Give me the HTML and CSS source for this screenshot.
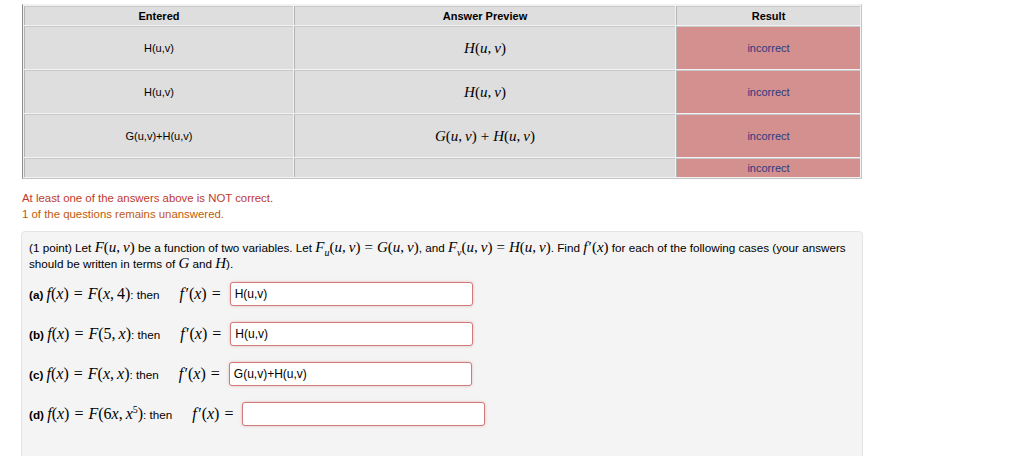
FILE: index.html
```html
<!DOCTYPE html>
<html lang="en">
<head>
    <meta charset="UTF-8">
    <title>Problem - Answers</title>
    <link rel="stylesheet" href="styles.css">
</head>
<body>
    <table class="attempt-results">
        <tr>
            <th class="col-entered">Entered</th>
            <th class="col-preview">Answer Preview</th>
            <th class="col-result">Result</th>
        </tr>
        <tr class="tall">
            <td>H(u,v)</td>
            <td class="preview"><span class="m">H</span>(<span class="m">u</span>,<span class="m sp">v</span>)</td>
            <td class="incorrect">incorrect</td>
        </tr>
        <tr class="tall">
            <td>H(u,v)</td>
            <td class="preview"><span class="m">H</span>(<span class="m">u</span>,<span class="m sp">v</span>)</td>
            <td class="incorrect">incorrect</td>
        </tr>
        <tr class="tall">
            <td>G(u,v)+H(u,v)</td>
            <td class="preview"><span class="m">G</span>(<span class="m">u</span>,<span class="m sp">v</span>)<span class="bin">+</span><span class="m">H</span>(<span class="m">u</span>,<span class="m sp">v</span>)</td>
            <td class="incorrect">incorrect</td>
        </tr>
        <tr class="short">
            <td></td>
            <td></td>
            <td class="incorrect">incorrect</td>
        </tr>
    </table>

    <div class="messages">
        <div class="msg-wrong">At least one of the answers above is NOT correct.</div>
        <div class="msg-blank">1 of the questions remains unanswered.</div>
    </div>

    <div class="problem">
        <p class="intro">(1 point) Let <span class="mx"><span class="m">F</span>(<span class="m">u</span>,<span class="m sp">v</span>)</span> be a function of two variables. Let <span class="mx"><span class="m">F</span><sub class="m">u</sub>(<span class="m">u</span>,<span class="m sp">v</span>)<span class="rel">=</span><span class="m">G</span>(<span class="m">u</span>,<span class="m sp">v</span>)</span>, and <span class="mx"><span class="m">F</span><sub class="m">v</sub>(<span class="m">u</span>,<span class="m sp">v</span>)<span class="rel">=</span><span class="m">H</span>(<span class="m">u</span>,<span class="m sp">v</span>)</span>. Find <span class="mx"><span class="m">f</span>&#8202;′(<span class="m">x</span>)</span> for each of the following cases (your answers should be written in terms of <span class="mx m">G</span> and <span class="mx m">H</span>).</p>

        <div class="part">
            <span class="label"><b>(a)</b> <span class="mx"><span class="m">f</span>(<span class="m">x</span>)<span class="rel">=</span><span class="m">F</span>(<span class="m">x</span>,<span class="sp">4</span>)</span>: then</span>
            <span class="deriv mx"><span class="m">f</span>&#8202;′(<span class="m">x</span>)<span class="rel">=</span></span>
            <input class="answer" type="text" value="H(u,v)">
        </div>
        <div class="part">
            <span class="label"><b>(b)</b> <span class="mx"><span class="m">f</span>(<span class="m">x</span>)<span class="rel">=</span><span class="m">F</span>(5,<span class="m sp">x</span>)</span>: then</span>
            <span class="deriv mx"><span class="m">f</span>&#8202;′(<span class="m">x</span>)<span class="rel">=</span></span>
            <input class="answer" type="text" value="H(u,v)">
        </div>
        <div class="part">
            <span class="label"><b>(c)</b> <span class="mx"><span class="m">f</span>(<span class="m">x</span>)<span class="rel">=</span><span class="m">F</span>(<span class="m">x</span>,<span class="m sp">x</span>)</span>: then</span>
            <span class="deriv mx"><span class="m">f</span>&#8202;′(<span class="m">x</span>)<span class="rel">=</span></span>
            <input class="answer" type="text" value="G(u,v)+H(u,v)">
        </div>
        <div class="part">
            <span class="label"><b>(d)</b> <span class="mx"><span class="m">f</span>(<span class="m">x</span>)<span class="rel">=</span><span class="m">F</span>(6<span class="m">x</span>,<span class="m sp">x</span><sup>5</sup>)</span>: then</span>
            <span class="deriv mx"><span class="m">f</span>&#8202;′(<span class="m">x</span>)<span class="rel">=</span></span>
            <input class="answer" type="text" value="">
        </div>
    </div>
</body>
</html>
```

FILE: styles.css
```css
/* page */
body {
    margin: 0;
    padding: 4px 0 0 22px;
    background: #fff;
    font-family: 'Liberation Sans', Arial, sans-serif;
    font-size: 11px;
    color: #000;
}

/* results table */
.attempt-results {
    width: 840px;
    border-collapse: separate;
    border-spacing: 1px;
    background: #f2f2f2;
    border-left: 1px solid #8a8a8a;
    border-top: 1px solid #f0f0f0;
    border-right: 1px solid #c4c4c4;
    border-bottom: 1px solid #c4c4c4;
    margin: 0;
}

.attempt-results th,
.attempt-results td {
    background: #dedede;
    text-align: center;
    padding: 0;
    border-left: 1px solid #b4b4b4;
    border-top: 1px solid #c8c8c8;
}

.attempt-results th {
    height: 18px;
    font-weight: bold;
}

.col-entered { width: 268px; }
.col-preview { width: 380px; }

.tall td { height: 42px; }
.short td { height: 18px; }

.attempt-results td.incorrect {
    background: #d48f8f;
    color: #2b3a7e;
}

.preview {
    font-family: 'Liberation Serif', 'Times New Roman', serif;
    font-size: 15px;
}

/* math text */
.m {
    font-family: 'Liberation Serif', 'Times New Roman', serif;
    font-style: italic;
}

.mx {
    font-family: 'Liberation Serif', 'Times New Roman', serif;
    font-size: 15px;
    line-height: 0;
}

.sp { margin-left: 3px; }
.rel { margin: 0 4px; }
.bin { margin: 0 4px; }

.mx sub,
.mx sup {
    font-size: 10px;
    line-height: 0;
}

/* feedback messages */
.messages {
    margin-top: 11px;
    line-height: 16px;
    font-size: 11.4px;
}

.msg-wrong { color: #c0392b; }
.msg-blank { color: #c05a0a; }

/* problem box */
.problem {
    width: 833px;
    margin: 9px 0 0 -1px;
    padding: 8px 0 30px 7px;
    background: #f4f4f4;
    border: 1px solid #e3e3e3;
    border-radius: 4px;
    font-size: 11.7px;
}

.intro {
    margin: 0 0 10px;
    line-height: 16px;
}

.part {
    display: flex;
    align-items: center;
    height: 24px;
    margin-bottom: 16px;
}

.part .mx {
    font-size: 16px;
}

.part .rel {
    margin: 0 5px;
}

.label b {
    font-weight: bold;
}

.deriv {
    margin-left: 20px;
    margin-right: 4px;
}

.answer {
    width: 233px;
    height: 20px;
    padding: 1px 4px;
    border: 1px solid #d07a7a;
    border-radius: 3px;
    box-shadow: 0 0 3px rgba(200, 80, 80, 0.35);
    background: #fff;
    font-family: 'Liberation Sans', Arial, sans-serif;
    font-size: 12px;
    color: #000;
}
```
